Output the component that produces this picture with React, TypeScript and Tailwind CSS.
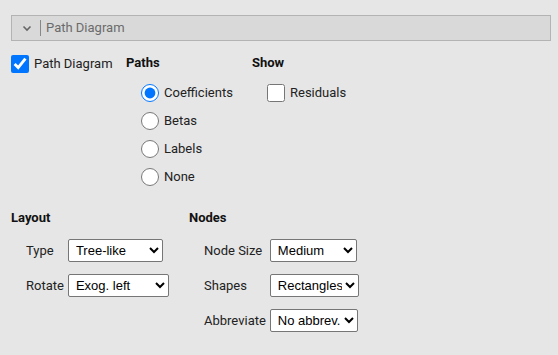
import { useState } from 'react'

const labelFont = "font-['Roboto','Liberation_Sans',sans-serif]"
const selectCls =
  "h-[23px] border border-[#767676] bg-white rounded-[2px] text-[13px] text-black font-['Liberation_Sans',Arial,sans-serif] pl-[3px] outline-none"

function Radio({ label, checked, onChange }: { label: string; checked: boolean; onChange: () => void }) {
  return (
    <label className="flex items-center h-[28px] gap-[5px]">
      <input
        type="radio"
        checked={checked}
        onChange={onChange}
        className="w-[18px] h-[18px] m-0 accent-[#0075ff]"
      />
      <span className="text-[13px] text-[#222]">{label}</span>
    </label>
  )
}

export default function App() {
  const [enabled, setEnabled] = useState(true)
  const [paths, setPaths] = useState('Coefficients')
  const [residuals, setResiduals] = useState(false)

  return (
    <div className={`w-[558px] h-[355px] bg-[#e6e6e6] pt-[15px] px-[11px] ${labelFont}`}>
      <div className="h-[26px] w-[540px] border border-[#b3b3b3] bg-[#d9d9d9] flex items-center">
        <svg width="10" height="10" viewBox="0 0 10 10" className="ml-[10px]">
          <path d="M1.5 3.5 L5 7 L8.5 3.5" fill="none" stroke="#666" strokeWidth="1.6" />
        </svg>
        <div className="w-px h-[16px] bg-[#888] ml-[8px]" />
        <span className="ml-[5px] text-[13px] text-[#6b6b6b]">Path Diagram</span>
      </div>

      <div className="flex mt-[14px]">
        <label className="flex items-start gap-[5px] w-[115px]">
          <input
            type="checkbox"
            checked={enabled}
            onChange={() => setEnabled(!enabled)}
            className="w-[18px] h-[18px] m-0 accent-[#0075ff]"
          />
          <span className="text-[13px] text-[#222] leading-[18px]">Path Diagram</span>
        </label>

        <div className="w-[126px]">
          <div className="text-[13px] font-bold text-[#111] leading-[15px]">Paths</div>
          <div className="ml-[15px] mt-[9px] flex flex-col">
            {['Coefficients', 'Betas', 'Labels', 'None'].map((p) => (
              <Radio key={p} label={p} checked={paths === p} onChange={() => setPaths(p)} />
            ))}
          </div>
        </div>

        <div>
          <div className="text-[13px] font-bold text-[#111] leading-[15px]">Show</div>
          <label className="ml-[15px] mt-[9px] flex items-center h-[28px] gap-[5px]">
            <input
              type="checkbox"
              checked={residuals}
              onChange={() => setResiduals(!residuals)}
              className="w-[18px] h-[18px] m-0 accent-[#0075ff]"
            />
            <span className="text-[13px] text-[#222]">Residuals</span>
          </label>
        </div>
      </div>

      <div className="flex mt-[19px]">
        <div className="w-[178px]">
          <div className="text-[13px] font-bold text-[#111] leading-[15px]">Layout</div>
          <div className="ml-[15px] mt-[14px] grid grid-cols-[auto_auto] gap-x-[4px] gap-y-[12px] items-center justify-start">
            <span className="text-[13px] text-[#222]">Type</span>
            <select className={`${selectCls} w-[95px]`} defaultValue="Tree-like">
              <option>Tree-like</option>
              <option>Circle</option>
              <option>Spring</option>
            </select>
            <span className="text-[13px] text-[#222]">Rotate</span>
            <select className={`${selectCls} w-[101px]`} defaultValue="Exog. left">
              <option>Exog. left</option>
              <option>Exog. top</option>
              <option>Exog. right</option>
              <option>Exog. bottom</option>
            </select>
          </div>
        </div>

        <div>
          <div className="text-[13px] font-bold text-[#111] leading-[15px]">Nodes</div>
          <div className="ml-[15px] mt-[14px] grid grid-cols-[auto_auto] gap-x-[4px] gap-y-[12px] items-center justify-start">
            <span className="text-[13px] text-[#222]">Node Size</span>
            <select className={`${selectCls} w-[87px]`} defaultValue="Medium">
              <option>Small</option>
              <option>Medium</option>
              <option>Large</option>
            </select>
            <span className="text-[13px] text-[#222]">Shapes</span>
            <select className={`${selectCls} w-[89px]`} defaultValue="Rectangles">
              <option>Rectangles</option>
              <option>Circles</option>
            </select>
            <span className="text-[13px] text-[#222]">Abbreviate</span>
            <select className={`${selectCls} w-[88px]`} defaultValue="No abbrev.">
              <option>No abbrev.</option>
              <option>Abbrev.</option>
            </select>
          </div>
        </div>
      </div>
    </div>
  )
}
